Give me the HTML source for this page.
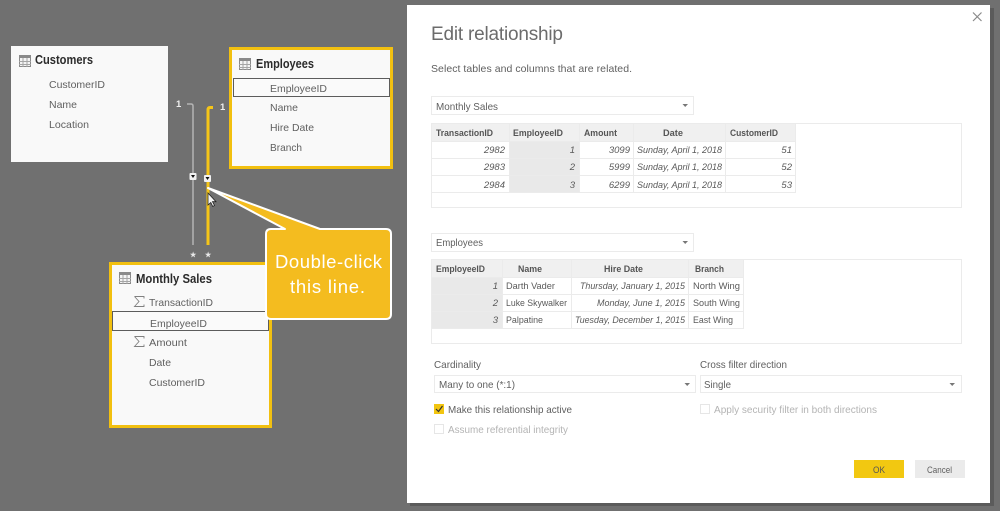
<!DOCTYPE html>
<html><head><meta charset="utf-8"><style>
html,body{margin:0;padding:0;background:#707070;width:1000px;height:511px;overflow:hidden}
svg{display:block;filter:blur(0.3px)}
text{font-family:"Liberation Sans",sans-serif;font-size:10.5px;fill:#606060}
.b{font-weight:bold;font-size:12.5px;fill:#2b2b2b}
.h{font-weight:bold;font-size:9.5px;fill:#555}
.i{font-style:italic;font-size:9.5px;fill:#5a5a5a}
.t{font-size:9.5px;fill:#5a5a5a}
.d{fill:#b4b4b4}
</style></head><body>
<svg width="1000" height="511" viewBox="0 0 1000 511" xmlns="http://www.w3.org/2000/svg">
<defs>
<g id="ti"><rect x="0.5" y="0.5" width="11" height="11" fill="#f4f4f4" stroke="#8a8a8a"/><rect x="0" y="0" width="12" height="3" fill="#8a8a8a"/><path d="M0 6.5H12M0 9.5H12M4 3V12M8 3V12" stroke="#a5a5a5" stroke-width="1" fill="none"/></g>
<path id="sg" d="M0.5 0.5H10V2.5M0.5 0.5L5 5.5L0.5 10.5H10V8.5" fill="none" stroke="#808080" stroke-width="0.900"/>
</defs>
<rect width="1000" height="511" fill="#707070"/>

<!-- Customers -->
<rect x="11" y="46" width="157" height="116" fill="#f9f9f9"/>
<use href="#ti" x="19" y="55"/>
<text class="b" x="35" y="64" textLength="58" lengthAdjust="spacingAndGlyphs">Customers</text>
<text x="49" y="88" textLength="56" lengthAdjust="spacingAndGlyphs">CustomerID</text>
<text x="49" y="108" textLength="28" lengthAdjust="spacingAndGlyphs">Name</text>
<text x="49" y="128" textLength="40" lengthAdjust="spacingAndGlyphs">Location</text>

<!-- Employees -->
<rect x="230.500" y="48.500" width="161" height="119" fill="#f9f9f9" stroke="#f2c010" stroke-width="3"/>
<use href="#ti" x="239" y="58"/>
<text class="b" x="256" y="68" textLength="58" lengthAdjust="spacingAndGlyphs">Employees</text>
<rect x="233.500" y="78.500" width="156" height="18" fill="#fafafa" stroke="#5c5c5c"/>
<text x="270" y="92" textLength="57" lengthAdjust="spacingAndGlyphs">EmployeeID</text>
<text x="270" y="111" textLength="28" lengthAdjust="spacingAndGlyphs">Name</text>
<text x="270" y="131" textLength="44" lengthAdjust="spacingAndGlyphs">Hire Date</text>
<text x="270" y="151" textLength="32" lengthAdjust="spacingAndGlyphs">Branch</text>

<!-- Monthly Sales -->
<rect x="110.500" y="263.500" width="160" height="163" fill="#f9f9f9" stroke="#f2c010" stroke-width="3"/>
<use href="#ti" x="119" y="272"/>
<text class="b" x="136" y="283" textLength="76" lengthAdjust="spacingAndGlyphs">Monthly Sales</text>
<use href="#sg" x="134" y="296"/>
<text x="149" y="306" textLength="64" lengthAdjust="spacingAndGlyphs">TransactionID</text>
<rect x="112.500" y="311.500" width="156" height="19" fill="#fafafa" stroke="#5c5c5c"/>
<text x="150" y="327" textLength="57" lengthAdjust="spacingAndGlyphs">EmployeeID</text>
<use href="#sg" x="134" y="336"/>
<text x="149" y="346" textLength="38" lengthAdjust="spacingAndGlyphs">Amount</text>
<text x="149" y="366" textLength="22" lengthAdjust="spacingAndGlyphs">Date</text>
<text x="149" y="386" textLength="56" lengthAdjust="spacingAndGlyphs">CustomerID</text>

<!-- Lines -->
<path d="M187 104H191Q193 104 193 106V245" fill="none" stroke="#b4b4b4" stroke-width="1.500"/>
<path d="M213 107.500H210Q208 107.500 208 110V245" fill="none" stroke="#f5c518" stroke-width="3"/>
<text x="176" y="107" style="font-size:9.5px;font-weight:bold;fill:#eee">1</text>
<text x="220" y="110" style="font-size:9.5px;font-weight:bold;fill:#eee">1</text>
<text x="190" y="257" style="font-size:7px;font-weight:bold;fill:#e8e8e8">★</text>
<text x="205" y="257" style="font-size:7px;font-weight:bold;fill:#e8e8e8">★</text>
<rect x="189.500" y="173" width="7" height="7" rx="1" fill="#f2f2f2"/><path d="M191 175H195L193 178Z" fill="#111"/>
<rect x="204" y="175" width="7" height="7" rx="1" fill="#f2f2f2"/><path d="M205.500 177H209.500L207.500 180Z" fill="#111"/>

<!-- Callout -->
<path d="M208 188L320 229H386Q391 229 391 234V314Q391 319 386 319H271Q266 319 266 314V234Q266 229 271 229H285Z" fill="#f4bc1f" stroke="#fff" stroke-width="2" stroke-linejoin="round"/>
<text x="275" y="268" style="font-size:18.500px;fill:#fff" textLength="107">Double-click</text>
<text x="290" y="293" style="font-size:18.500px;fill:#fff" textLength="75">this line.</text>
<!-- Cursor -->
<path d="M208 193V205L210.800 202.500L212.800 206.500L214.500 205.500L212.500 201.700H216Z" fill="#f4f4f4" stroke="#222" stroke-width="0.800"/>

<!-- Dialog -->
<rect x="410" y="8" width="584" height="498" fill="#4a4a4a" opacity="0.55"/>
<rect x="407" y="5" width="583" height="498" fill="#fff"/>
<path d="M973 12.500L981.500 21M981.500 12.500L973 21" stroke="#8a8a8a" stroke-width="1.200" fill="none"/>
<text x="431" y="40" style="font-size:19px;fill:#6c6c6c" textLength="132">Edit relationship</text>
<text x="431" y="72" textLength="201">Select tables and columns that are related.</text>

<!-- Dropdown 1 -->
<rect x="431.500" y="96.500" width="262" height="18" fill="#fff" stroke="#ebebeb"/>
<text x="436" y="110" textLength="62" lengthAdjust="spacingAndGlyphs">Monthly Sales</text>
<path d="M682.500 104H688L685.200 107Z" fill="#777"/>

<!-- Table 1 -->
<rect x="431.500" y="123.500" width="530" height="84" fill="#fff" stroke="#ebebeb"/>
<rect x="432" y="124" width="363" height="17" fill="#f0f0f0"/>
<rect x="510" y="141" width="69" height="52" fill="#e9e9e9"/>
<path d="M432 141.500H795M432 158.500H795M432 175.500H795M432 192.500H795M509.500 124V193M579.500 124V193M633.500 124V193M725.500 124V193M795.500 124V193" stroke="#ebebeb" fill="none"/>
<text class="h" x="436" y="136" textLength="57" lengthAdjust="spacingAndGlyphs">TransactionID</text>
<text class="h" x="513" y="136" textLength="50" lengthAdjust="spacingAndGlyphs">EmployeeID</text>
<text class="h" x="584" y="136" textLength="33" lengthAdjust="spacingAndGlyphs">Amount</text>
<text class="h" x="663" y="136" textLength="20" lengthAdjust="spacingAndGlyphs">Date</text>
<text class="h" x="730" y="136" textLength="48" lengthAdjust="spacingAndGlyphs">CustomerID</text>
<text class="i" x="505" y="153" text-anchor="end">2982</text>
<text class="i" x="575" y="153" text-anchor="end">1</text>
<text class="i" x="630" y="153" text-anchor="end">3099</text>
<text class="i" x="637" y="153" textLength="85" lengthAdjust="spacingAndGlyphs">Sunday, April 1, 2018</text>
<text class="i" x="792" y="153" text-anchor="end">51</text>
<text class="i" x="505" y="170" text-anchor="end">2983</text>
<text class="i" x="575" y="170" text-anchor="end">2</text>
<text class="i" x="630" y="170" text-anchor="end">5999</text>
<text class="i" x="637" y="170" textLength="85" lengthAdjust="spacingAndGlyphs">Sunday, April 1, 2018</text>
<text class="i" x="792" y="170" text-anchor="end">52</text>
<text class="i" x="505" y="188" text-anchor="end">2984</text>
<text class="i" x="575" y="188" text-anchor="end">3</text>
<text class="i" x="630" y="188" text-anchor="end">6299</text>
<text class="i" x="637" y="188" textLength="85" lengthAdjust="spacingAndGlyphs">Sunday, April 1, 2018</text>
<text class="i" x="792" y="188" text-anchor="end">53</text>

<!-- Dropdown 2 -->
<rect x="431.500" y="233.500" width="262" height="18" fill="#fff" stroke="#ebebeb"/>
<text x="436" y="246" textLength="47" lengthAdjust="spacingAndGlyphs">Employees</text>
<path d="M682.500 241H688L685.200 244Z" fill="#777"/>

<!-- Table 2 -->
<rect x="431.500" y="259.500" width="530" height="84" fill="#fff" stroke="#ebebeb"/>
<rect x="432" y="260" width="311" height="17" fill="#f0f0f0"/>
<rect x="432" y="277" width="71" height="52" fill="#e9e9e9"/>
<path d="M432 277.500H743M432 294.500H743M432 311.500H743M432 328.500H743M502.500 260V329M571.500 260V329M688.500 260V329M743.500 260V329" stroke="#ebebeb" fill="none"/>
<text class="h" x="436" y="272" textLength="49" lengthAdjust="spacingAndGlyphs">EmployeeID</text>
<text class="h" x="518" y="272" textLength="24" lengthAdjust="spacingAndGlyphs">Name</text>
<text class="h" x="604" y="272" textLength="39" lengthAdjust="spacingAndGlyphs">Hire Date</text>
<text class="h" x="695" y="272" textLength="29" lengthAdjust="spacingAndGlyphs">Branch</text>
<text class="i" x="498" y="289" text-anchor="end">1</text>
<text class="t" x="506" y="289" textLength="49" lengthAdjust="spacingAndGlyphs">Darth Vader</text>
<text class="i" x="685" y="289" text-anchor="end" textLength="105" lengthAdjust="spacingAndGlyphs">Thursday, January 1, 2015</text>
<text class="t" x="693" y="289" textLength="47" lengthAdjust="spacingAndGlyphs">North Wing</text>
<text class="i" x="498" y="306" text-anchor="end">2</text>
<text class="t" x="506" y="306" textLength="61" lengthAdjust="spacingAndGlyphs">Luke Skywalker</text>
<text class="i" x="685" y="306" text-anchor="end" textLength="88" lengthAdjust="spacingAndGlyphs">Monday, June 1, 2015</text>
<text class="t" x="693" y="306" textLength="47" lengthAdjust="spacingAndGlyphs">South Wing</text>
<text class="i" x="498" y="323" text-anchor="end">3</text>
<text class="t" x="506" y="323" textLength="37" lengthAdjust="spacingAndGlyphs">Palpatine</text>
<text class="i" x="685" y="323" text-anchor="end" textLength="110" lengthAdjust="spacingAndGlyphs">Tuesday, December 1, 2015</text>
<text class="t" x="693" y="323" textLength="40" lengthAdjust="spacingAndGlyphs">East Wing</text>

<!-- Bottom controls -->
<text x="434" y="368" textLength="47" lengthAdjust="spacingAndGlyphs">Cardinality</text>
<text x="700" y="368" textLength="87" lengthAdjust="spacingAndGlyphs">Cross filter direction</text>
<rect x="434.500" y="375.500" width="261" height="17" fill="#fff" stroke="#ebebeb"/>
<text x="439" y="388" textLength="76" lengthAdjust="spacingAndGlyphs">Many to one (*:1)</text>
<path d="M684.500 383H690L687.200 386Z" fill="#777"/>
<rect x="700.500" y="375.500" width="261" height="17" fill="#fff" stroke="#ebebeb"/>
<text x="704" y="388" textLength="27" lengthAdjust="spacingAndGlyphs">Single</text>
<path d="M949.500 383H955L952.200 386Z" fill="#777"/>
<rect x="434" y="404" width="10" height="10" fill="#f2c510"/>
<path d="M436 409L438.500 411.500L442.500 406" stroke="#333" stroke-width="1.200" fill="none"/>
<text x="448" y="413" textLength="124" lengthAdjust="spacingAndGlyphs">Make this relationship active</text>
<rect x="434.500" y="424.500" width="9" height="9" fill="#fff" stroke="#e6e6e6"/>
<text class="d" x="448" y="433" textLength="120" lengthAdjust="spacingAndGlyphs">Assume referential integrity</text>
<rect x="700.500" y="404.500" width="9" height="9" fill="#fff" stroke="#e6e6e6"/>
<text class="d" x="714" y="413" textLength="163" lengthAdjust="spacingAndGlyphs">Apply security filter in both directions</text>

<rect x="854" y="460" width="50" height="18" fill="#f2c811"/>
<text x="873" y="473" style="font-size:9.5px;fill:#555" textLength="12" lengthAdjust="spacingAndGlyphs">OK</text>
<rect x="915" y="460" width="50" height="18" fill="#ebebeb"/>
<text x="927" y="473" style="font-size:9.5px" textLength="25" lengthAdjust="spacingAndGlyphs">Cancel</text>
</svg>
</body></html>
